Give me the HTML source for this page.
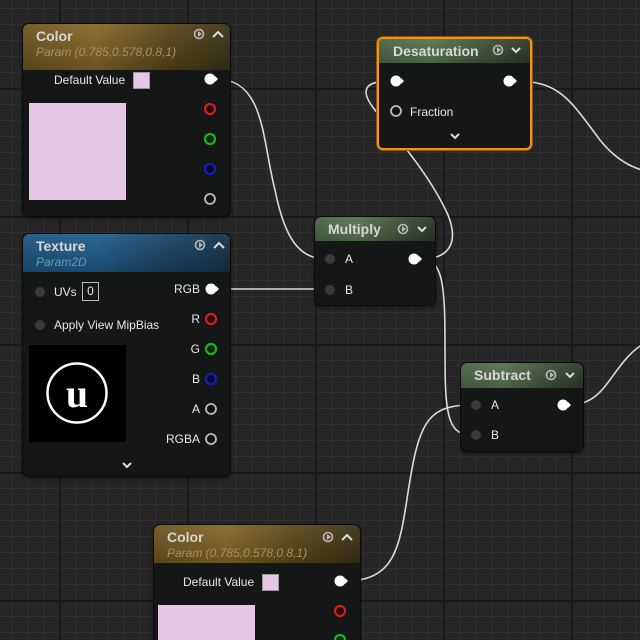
<!DOCTYPE html>
<html><head><meta charset="utf-8"><style>
*{margin:0;padding:0;box-sizing:border-box}
html,body{width:640px;height:640px;overflow:hidden}
body{background:#262626;font-family:"Liberation Sans","DejaVu Sans",sans-serif;position:relative}
.grid{position:absolute;left:0;top:0;width:640px;height:640px;
background-image:
linear-gradient(to right,#1a1a1a 0,#1a1a1a 2px,transparent 2px),
linear-gradient(to bottom,#1a1a1a 0,#1a1a1a 2px,transparent 2px),
linear-gradient(to right,#2f2f2f 0,#2f2f2f 1px,transparent 1px),
linear-gradient(to bottom,#2f2f2f 0,#2f2f2f 1px,transparent 1px);
background-size:128px 128px,128px 128px,16px 16px,16px 16px;
background-position:59px 0,0 88px,11px 0,0 8px}
.node{position:absolute;background:#151616;border-radius:6px;box-shadow:0 0 0 1px #0a0a0a,0 2px 4px rgba(0,0,0,.6);color:#e6e6e6;font-size:12px;overflow:hidden}
.hdr{position:absolute;left:0;right:0;top:0;border-radius:6px 6px 0 0}
.title{position:absolute;left:13px;top:4px;font-weight:bold;font-size:14px;color:#d8d8d8}
.sub{position:absolute;left:13px;top:21px;font-style:italic;font-size:12px}
.gold{background:linear-gradient(to bottom,rgba(255,255,255,.06),rgba(0,0,0,.2)),linear-gradient(to right,#6e5520,#86692a 35%,#5a4718 70%,#3c3216 100%)}
.blue{background:linear-gradient(to bottom,rgba(255,255,255,.06),rgba(0,0,0,.2)),linear-gradient(to right,#1c5580,#205e8c 35%,#1a4466 70%,#16324a 100%)}
.green{background:linear-gradient(to bottom,rgba(255,255,255,.06),rgba(0,0,0,.15)),linear-gradient(to right,#4a6445,#56744f 35%,#3e5239 70%,#2c382a 100%)}
.lbl{position:absolute;font-size:12px;color:#e8e8e8;white-space:nowrap}
.sw{position:absolute;background:#e6c8e6}
</style></head><body>
<div class="grid"></div>

<svg width="640" height="640" style="position:absolute;left:0;top:0" fill="none" stroke="#dcdcdc" stroke-width="1.6">
<path d="M216 79 C265 79, 262 140, 275 190 C285 240, 300 259, 326 259"/>
<path d="M216 289 L326 289"/>
<path d="M421 259 C452 259, 458 240, 448 215 C430 175, 395 135, 375 110 C355 85, 372 81, 392 81"/>
<path d="M421 259 C445 259, 445 290, 445 360 C445 420, 450 435, 472 435"/>
<path d="M345 581 C400 581, 400 540, 410 480 C420 420, 430 405, 472 405"/>
<path d="M515 81 C560 81, 570 100, 600 140 C620 165, 640 170, 650 172"/>
<path d="M569 405 C610 405, 610 360, 650 340"/>
</svg>

<!-- Color 1 -->
<div class="node" style="left:23px;top:24px;width:207px;height:192px">
 <div class="hdr gold" style="height:46px"><div class="title">Color</div><div class="sub" style="color:#a8925e">Param (0.785,0.578,0.8,1)</div></div>
 <div class="lbl" style="left:31px;top:49px">Default Value</div>
 <div class="sw" style="left:110px;top:48px;width:17px;height:17px;border:1px solid #999"></div>
 <div class="sw" style="left:6px;top:79px;width:97px;height:97px"></div>
</div>
<!-- Texture -->
<div class="node" style="left:23px;top:234px;width:207px;height:242px">
 <div class="hdr blue" style="height:38px"><div class="title">Texture</div><div class="sub" style="color:#6a98bc">Param2D</div></div>
 <div class="lbl" style="left:31px;top:51px">UVs</div>
 <div class="lbl" style="left:59px;top:48px;width:17px;height:19px;border:1px solid #bbb;text-align:center;line-height:17px">0</div>
 <div class="lbl" style="left:31px;top:84px">Apply View MipBias</div>
 <div style="position:absolute;left:6px;top:111px;width:97px;height:97px;background:#000"></div>
 <div class="lbl" style="right:30px;top:48px">RGB</div>
 <div class="lbl" style="right:30px;top:78px">R</div>
 <div class="lbl" style="right:30px;top:108px">G</div>
 <div class="lbl" style="right:30px;top:138px">B</div>
 <div class="lbl" style="right:30px;top:168px">A</div>
 <div class="lbl" style="right:30px;top:198px">RGBA</div>
</div>
<!-- Multiply -->
<div class="node" style="left:315px;top:217px;width:120px;height:88px">
 <div class="hdr green" style="height:24px"><div class="title" style="top:4px">Multiply</div></div>
 <div class="lbl" style="left:30px;top:35px">A</div>
 <div class="lbl" style="left:30px;top:66px">B</div>
</div>
<!-- Desaturation -->
<div class="node" style="left:377px;top:37px;width:155px;height:113px;border:2px solid #e8961e;box-shadow:0 0 0 1px #8a5510">
 <div class="hdr green" style="height:24px;border-radius:4px 4px 0 0"><div class="title" style="left:14px;top:4px">Desaturation</div></div>
 <div class="lbl" style="left:31px;top:66px">Fraction</div>
</div>
<!-- Subtract -->
<div class="node" style="left:461px;top:363px;width:122px;height:88px">
 <div class="hdr green" style="height:25px"><div class="title" style="top:4px">Subtract</div></div>
 <div class="lbl" style="left:30px;top:35px">A</div>
 <div class="lbl" style="left:30px;top:65px">B</div>
</div>
<!-- Color 2 -->
<div class="node" style="left:154px;top:525px;width:206px;height:130px">
 <div class="hdr gold" style="height:38px"><div class="title">Color</div><div class="sub" style="color:#a8925e">Param (0.785,0.578,0.8,1)</div></div>
 <div class="lbl" style="left:29px;top:50px">Default Value</div>
 <div class="sw" style="left:108px;top:49px;width:17px;height:17px;border:1px solid #999"></div>
 <div class="sw" style="left:4px;top:80px;width:97px;height:50px"></div>
</div>

<svg width="640" height="640" style="position:absolute;left:0;top:0">
<defs>
<g id="pf"><circle r="5.5" fill="#fff"/><path d="M5 -3 L8 0 L5 3Z" fill="#fff"/></g>
</defs>
<g fill="none" stroke-width="1.6">
<g stroke="#bbb"><circle cx="199" cy="34" r="4.5"/><circle cx="200" cy="245" r="4.5"/><circle cx="403" cy="229" r="4.5"/><circle cx="498" cy="50" r="4.5"/><circle cx="551" cy="375" r="4.5"/><circle cx="328" cy="537" r="4.5"/></g>
<g stroke="#ddd" stroke-width="2"><path d="M213 37 L218 32 L223 37"/><path d="M214 248 L219 243 L224 248"/><path d="M342 540 L347 535 L352 540"/>
<path d="M418 227 L422 231 L426 227"/><path d="M512 48 L516 52 L520 48"/><path d="M566 373 L570 377 L574 373"/>
<path d="M123 463 L127 467 L131 463"/><path d="M451 134 L455 138 L459 134"/></g>
</g>
<g fill="#bbb"><path d="M198 31 L202 34 L198 37Z"/><path d="M199 242 L203 245 L199 248Z"/><path d="M402 226 L406 229 L402 232Z"/><path d="M497 47 L501 50 L497 53Z"/><path d="M550 372 L554 375 L550 378Z"/><path d="M327 534 L331 537 L327 540Z"/></g>
<use href="#pf" x="210" y="79"/><use href="#pf" x="211" y="289"/><use href="#pf" x="414" y="259"/><use href="#pf" x="396" y="81"/><use href="#pf" x="509" y="81"/><use href="#pf" x="563" y="405"/><use href="#pf" x="340" y="581"/>
<g stroke="#d02020" fill="#2a0505" stroke-width="2.2"><circle cx="210" cy="109" r="5"/><circle cx="211" cy="319" r="5"/><circle cx="340" cy="611" r="5"/></g>
<g stroke="#20b020" fill="#052a05" stroke-width="2.2"><circle cx="210" cy="139" r="5"/><circle cx="211" cy="349" r="5"/><circle cx="340" cy="640" r="5"/></g>
<g stroke="#1020c0" fill="#05052a" stroke-width="2.2"><circle cx="210" cy="169" r="5"/><circle cx="211" cy="379" r="5"/></g>
<g stroke="#bbb" fill="#111" stroke-width="1.8"><circle cx="210" cy="199" r="5"/><circle cx="211" cy="409" r="5"/><circle cx="211" cy="439" r="5"/><circle cx="396" cy="111" r="5"/></g>
<g fill="#3a3a3a"><circle cx="40" cy="292" r="5"/><circle cx="40" cy="325" r="5"/><circle cx="330" cy="259" r="5"/><circle cx="330" cy="290" r="5"/><circle cx="476" cy="405" r="5"/><circle cx="476" cy="435" r="5"/></g>
<circle cx="77" cy="393" r="29.5" fill="none" stroke="#fff" stroke-width="2.5"/>
<text x="77" y="407" text-anchor="middle" font-family="Liberation Serif,serif" font-weight="bold" font-size="40" fill="#fff">u</text>
</svg>
</body></html>
